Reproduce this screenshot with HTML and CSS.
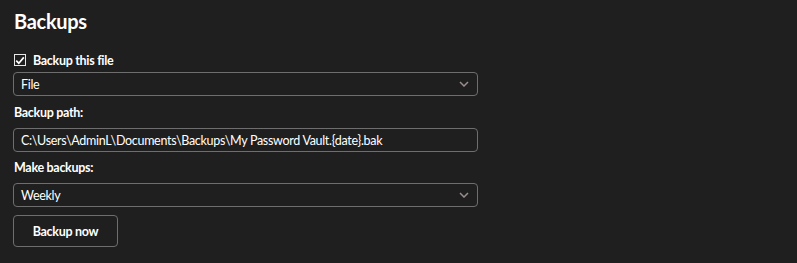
FILE: index.html
```html
<!DOCTYPE html>
<html>
<head>
    <title>Backups</title>
    <meta name="viewport" content="width=device-width, initial-scale=1.0">
    <link rel="stylesheet" href="styles.css">
</head>
<body>
    <div class="panel">
        <h1>Backups</h1>

        <label class="check">
            <span class="box">
                <svg width="10" height="9" viewBox="0 0 10 9"><path d="M1.2 4.6 L3.8 7.2 L8.8 1.4" fill="none" stroke="#ffffff" stroke-width="1.7"/></svg>
            </span>
            Backup this file
        </label>
        <div class="field">
            <span>File</span>
            <svg class="chev" width="10" height="6" viewBox="0 0 10 6"><path d="M1 1 L5 5 L9 1" fill="none" stroke="#9b8c8e" stroke-width="1.5"/></svg>
        </div>

        <div class="label">Backup path:</div>
        <div class="field">
            <span>C:\Users\AdminL\Documents\Backups\My Password Vault.{date}.bak</span>
        </div>

        <div class="label">Make backups:</div>
        <div class="field">
            <span>Weekly</span>
            <svg class="chev" width="10" height="6" viewBox="0 0 10 6"><path d="M1 1 L5 5 L9 1" fill="none" stroke="#9b8c8e" stroke-width="1.5"/></svg>
        </div>

        <button class="btn">Backup now</button>
    </div>
</body>
</html>
```

FILE: styles.css
```css
html, body { margin: 0; padding: 0; background: #1f1f1f; }
body { font-family: Lato, "Noto Sans", sans-serif; color: #ffffff; font-size: 12.5px; letter-spacing: -0.3px; }
.panel { padding: 9px 13px; width: 465px; display: flex; flex-direction: column; }
h1 { font-size: 20px; font-weight: 700; margin: 0 0 19px 1px; line-height: 24px; letter-spacing: -0.3px; }
.check { display: flex; align-items: center; gap: 7px; font-weight: 700; margin-left: 1px; height: 16px; margin-bottom: 4px; }
.box { width: 10px; height: 10px; border: 1px solid #e8e8e8; display: flex; align-items: center; justify-content: center; }
.label { font-weight: 700; margin: 8px 0 7px 1px; line-height: 16px; }
.field { height: 22px; border: 1px solid #6e6e6e; border-radius: 4px; display: flex; align-items: center; justify-content: space-between; padding: 0 6px 0 7px; }
.field + .label { margin-top: 9px; }
.field + .label + .field + .label { margin-top: 8px; }
.chev { margin-right: 2px; }
.btn { margin-top: 8px; align-self: flex-start; width: 105px; height: 32px; background: #1f1f1f; color: #ffffff; border: 1px solid #6e6e6e; border-radius: 4px; font-family: inherit; font-size: 12.5px; font-weight: 700; letter-spacing: -0.3px; }
```
